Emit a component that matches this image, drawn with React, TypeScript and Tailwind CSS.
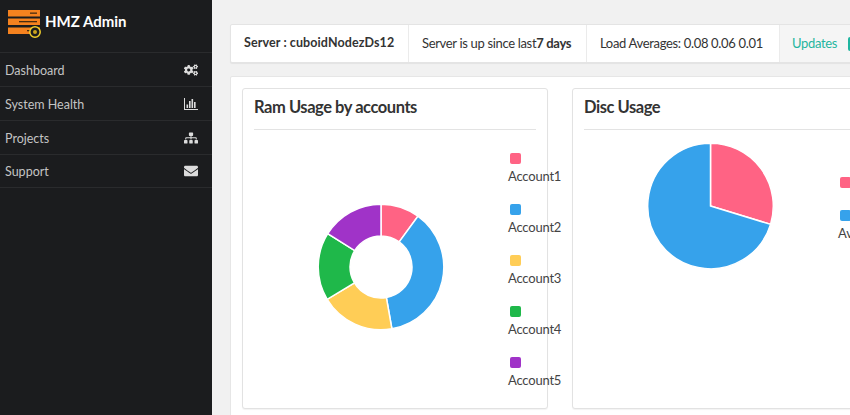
import { FaCogs, FaSitemap, FaEnvelope } from "react-icons/fa";

const polar = (cx: number, cy: number, r: number, deg: number) => {
  const a = ((deg - 90) * Math.PI) / 180;
  return `${(cx + r * Math.cos(a)).toFixed(2)} ${(cy + r * Math.sin(a)).toFixed(2)}`;
};

const sector = (cx: number, cy: number, R: number, r: number, from: number, to: number) => {
  const large = to - from > 180 ? 1 : 0;
  if (r === 0) {
    return `M${cx} ${cy}L${polar(cx, cy, R, from)}A${R} ${R} 0 ${large} 1 ${polar(cx, cy, R, to)}Z`;
  }
  return `M${polar(cx, cy, R, from)}A${R} ${R} 0 ${large} 1 ${polar(cx, cy, R, to)}L${polar(cx, cy, r, to)}A${r} ${r} 0 ${large} 0 ${polar(cx, cy, r, from)}Z`;
};

function BarsIcon({ className }: { className?: string }) {
  return (
    <svg width="14" height="12" viewBox="0 0 14 12" className={className} fill="currentColor">
      <rect x="0" y="0" width="1" height="12" />
      <rect x="0" y="11" width="14" height="1" />
      <rect x="2.5" y="6.5" width="1.6" height="3.5" />
      <rect x="5" y="3" width="1.6" height="7" />
      <rect x="7.5" y="1" width="1.6" height="9" />
      <rect x="10" y="4" width="1.6" height="6" />
    </svg>
  );
}

const nav = [
  { label: "Dashboard", Icon: FaCogs },
  { label: "System Health", Icon: BarsIcon },
  { label: "Projects", Icon: FaSitemap },
  { label: "Support", Icon: FaEnvelope },
];

const accounts = [
  { label: "Account1", color: "#ff6384" },
  { label: "Account2", color: "#36a2eb" },
  { label: "Account3", color: "#ffcd56" },
  { label: "Account4", color: "#1fb84a" },
  { label: "Account5", color: "#a033c8" },
];

const donut = [
  { from: 0, to: 36, color: "#ff6384" },
  { from: 36, to: 170, color: "#36a2eb" },
  { from: 170, to: 239, color: "#ffcd56" },
  { from: 239, to: 302, color: "#1fb84a" },
  { from: 302, to: 360, color: "#a033c8" },
];

function Logo() {
  return (
    <svg width="34" height="30" viewBox="0 0 34 30" className="shrink-0">
      <rect x="0" y="0" width="32" height="6.5" fill="#f5821f" />
      <rect x="0" y="8.5" width="32" height="6.5" fill="#f5821f" />
      <rect x="0" y="17.5" width="32" height="6.5" fill="#f5821f" />
      <rect x="22" y="2.5" width="7" height="1.3" fill="#4a2c10" />
      <rect x="11" y="11" width="18" height="1.3" fill="#4a2c10" />
      <rect x="19" y="20" width="8" height="1.3" fill="#4a2c10" />
      <circle cx="27" cy="22" r="5.2" fill="#1b1c1e" stroke="#f2d02b" strokeWidth="1.5" />
      <circle cx="27" cy="22" r="2" fill="#c9a21d" />
    </svg>
  );
}

export default function App() {
  return (
    <div className="flex h-[415px] w-[850px] overflow-hidden bg-[#f1f1f1] font-['Lato','Liberation_Sans',sans-serif]">
      <aside className="w-[212px] shrink-0 bg-[#1b1c1e]">
        <div className="flex h-[52px] items-start gap-[3px] pl-[8px] pt-[10px]">
          <Logo />
          <span className="mt-[1px] text-[15px] leading-[20px] font-bold text-white">HMZ Admin</span>
        </div>
        {nav.map(({ label, Icon }) => (
          <div
            key={label}
            className="flex h-[34px] items-center justify-between border-t border-[#2a2b2d] pl-[5px] pr-[14px] last:border-b"
          >
            <span className="mt-[3px] text-[12.5px] text-[#c4c4c4]">{label}</span>
            <Icon className="text-[14px] text-[#dcdcdc]" />
          </div>
        ))}
      </aside>

      <main className="min-w-0 flex-1 pl-[18px] pt-[24px]">
        <div className="flex h-[39px] w-[700px] items-center rounded-[2px] border border-[#e4e4e4] bg-white text-[13px] tracking-[-0.33px] text-[#333] shadow-[0_1px_1px_rgba(0,0,0,0.06)]">
          <div className="flex h-full w-[178px] shrink-0 items-center border-r border-[#ebebeb] pl-[13px] text-[12.5px] font-bold tracking-[0.1px]">
            Server : cuboidNodezDs12
          </div>
          <div className="flex h-full w-[178px] shrink-0 items-center whitespace-pre border-r border-[#ebebeb] pl-[13px]">
            Server is up since last<b>7 days</b>
          </div>
          <div className="flex h-full w-[193px] shrink-0 items-center whitespace-pre border-r border-[#ebebeb] pl-[13px]">
            Load Averages: 0.08 0.06 0.01
          </div>
          <div className="flex h-full flex-1 items-center gap-[11px] bg-[#f5f5f5] pl-[12px] text-[#1fb5a0]">
            Updates
            <span className="h-[14px] w-[20px] rounded-[2px] bg-[#1fb5a0]" />
          </div>
        </div>

        <div className="mt-[13px] flex h-[400px] w-[700px] gap-[24px] rounded-[2px] border border-[#e6e6e6] bg-white pl-[11px] pt-[11px]">
          <section className="h-[321px] w-[306px] shrink-0 rounded-[3px] border border-[#e2e2e2] bg-white px-[11px] shadow-[0_1px_1px_rgba(0,0,0,0.05)]">
            <h2 className="border-b border-[#e3e3e3] pb-[11px] pt-[7px] text-[16.5px] leading-[22px] font-bold tracking-[-0.45px] text-[#333]">
              Ram Usage by accounts
            </h2>
            <div className="flex">
              <svg width="238" height="278" viewBox="0 0 238 278" className="shrink-0">
                {donut.map((s) => (
                  <path
                    key={s.from}
                    d={sector(127, 137, 62.8, 31, s.from, s.to)}
                    fill={s.color}
                    stroke="#fff"
                    strokeWidth="1.5"
                  />
                ))}
              </svg>
              <ul className="ml-[16px] flex flex-col gap-[16px] pt-[23px]">
                {accounts.map((a) => (
                  <li key={a.label} className="flex h-[35px] flex-col items-start">
                    <span className="ml-[2px] h-[11px] w-[11px] rounded-[2px]" style={{ backgroundColor: a.color }} />
                    <span className="mt-[2px] text-[13px] leading-[20px] tracking-[-0.2px] whitespace-nowrap text-[#444]">
                      {a.label}
                    </span>
                  </li>
                ))}
              </ul>
            </div>
          </section>

          <section className="h-[321px] w-[340px] shrink-0 rounded-[3px] border border-[#e2e2e2] bg-white px-[11px] shadow-[0_1px_1px_rgba(0,0,0,0.05)]">
            <h2 className="border-b border-[#e3e3e3] pb-[11px] pt-[7px] text-[16.5px] leading-[22px] font-bold tracking-[-0.45px] text-[#333]">
              Disc Usage
            </h2>
            <div className="flex">
              <svg width="254" height="150" viewBox="0 0 254 150" className="shrink-0">
                <path d={sector(126.5, 76, 62.8, 0, 0, 107)} fill="#ff6384" stroke="#fff" strokeWidth="1.5" />
                <path d={sector(126.5, 76, 62.8, 0, 107, 360)} fill="#36a2eb" stroke="#fff" strokeWidth="1.5" />
              </svg>
              <ul className="flex flex-col gap-[21px] pt-[47px]">
                <li className="flex h-[12px] flex-col items-start">
                  <span className="ml-[2px] h-[11px] w-[11px] rounded-[2px] bg-[#ff6384]" />
                </li>
                <li className="flex flex-col items-start">
                  <span className="ml-[2px] h-[11px] w-[11px] rounded-[2px] bg-[#36a2eb]" />
                  <span className="mt-[2px] text-[13px] leading-[20px] tracking-[-0.1px] text-[#444]">Av</span>
                </li>
              </ul>
            </div>
          </section>
        </div>
      </main>
    </div>
  );
}
